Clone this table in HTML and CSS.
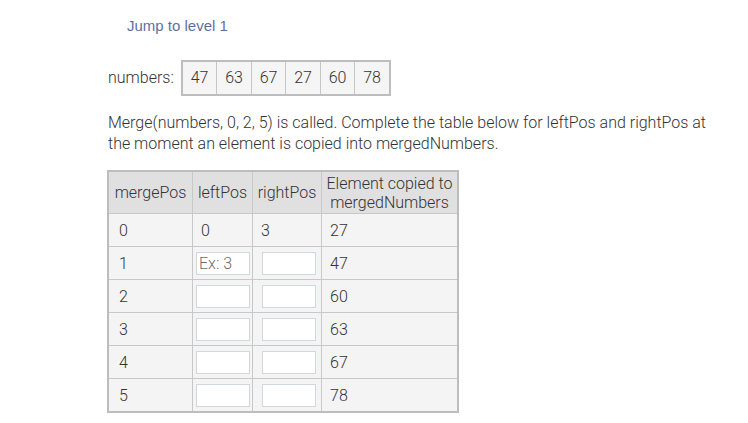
FILE: index.html
```html
<!DOCTYPE html>
<html>
<head>
<meta charset="utf-8">
<link rel="stylesheet" href="styles.css">
</head>
<body>
<div class="page">
  <a class="jump">Jump to level 1</a>
  <div class="array-row">
    <span class="array-label">numbers:</span>
    <div class="array">
      <span class="cell">47</span><span class="cell">63</span><span class="cell">67</span><span class="cell">27</span><span class="cell">60</span><span class="cell">78</span>
    </div>
  </div>
  <p class="prompt">Merge(numbers, 0, 2, 5) is called. Complete the table below for leftPos and rightPos at the moment an element is copied into mergedNumbers.</p>
  <table class="merge">
    <colgroup>
      <col class="k1"><col class="k2"><col class="k3"><col class="k4">
    </colgroup>
    <thead>
      <tr>
        <th>mergePos</th>
        <th>leftPos</th>
        <th>rightPos</th>
        <th><span class="hl">Element copied to</span><span class="hl">mergedNumbers</span></th>
      </tr>
    </thead>
    <tbody>
      <tr><td class="c1">0</td><td class="txt">0</td><td class="txt">3</td><td class="c4">27</td></tr>
      <tr><td class="c1">1</td><td class="inp"><input type="text" placeholder="Ex: 3"></td><td class="inp r"><input type="text"></td><td class="c4">47</td></tr>
      <tr><td class="c1">2</td><td class="inp"><input type="text"></td><td class="inp r"><input type="text"></td><td class="c4">60</td></tr>
      <tr><td class="c1">3</td><td class="inp"><input type="text"></td><td class="inp r"><input type="text"></td><td class="c4">63</td></tr>
      <tr><td class="c1">4</td><td class="inp"><input type="text"></td><td class="inp r"><input type="text"></td><td class="c4">67</td></tr>
      <tr class="last"><td class="c1">5</td><td class="inp"><input type="text"></td><td class="inp r"><input type="text"></td><td class="c4">78</td></tr>
    </tbody>
  </table>
</div>
</body>
</html>
```
FILE: styles.css
```css
html, body {
  margin: 0;
  padding: 0;
  background: #ffffff;
}

.page {
  padding: 17px 0 0 108px;
  font-family: Roboto, "Noto Sans", sans-serif;
  font-weight: 300;
  font-size: 16px;
  color: #333333;
}

.jump {
  display: block;
  margin-left: 19px;
  font-family: "Liberation Sans", Arial, sans-serif;
  font-weight: 400;
  font-size: 15px;
  line-height: 17px;
  color: #5f6f9f;
}

.array-row {
  display: flex;
  align-items: center;
  margin-top: 26px;
}

.array-label {
  margin-right: 7px;
  line-height: 20px;
}

.array {
  display: flex;
  border: 2px solid #bdbdbd;
  background: #f5f5f5;
}

.cell {
  width: 33.5px;
  text-align: center;
  height: 32px;
  line-height: 32px;
  border-right: 1px solid #c6c6c6;
}

.cell:last-child {
  border-right: none;
}

.prompt {
  margin: 16px 0 16px 0;
  max-width: 615px;
  line-height: 21px;
}

.merge {
  width: 352px;
  margin-left: -1px;
  border-collapse: separate;
  border-spacing: 0;
  border: 2px solid #bdbdbd;
  table-layout: fixed;
  background: #f4f4f4;
}

.merge col.k1 { width: 84px; }
.merge col.k2 { width: 60px; }
.merge col.k3 { width: 69px; }
.merge col.k4 { width: 135px; }

.merge th, .merge td {
  border-right: 1px solid #c8c8c8;
  border-bottom: 1px solid #c8c8c8;
  padding: 0;
  font-weight: 300;
}

.merge th:last-child, .merge td:last-child {
  border-right: none;
}

.merge tr.last td {
  border-bottom: none;
}

.merge th {
  background: #e0e0e0;
  height: 41px;
  text-align: center;
  line-height: 19px;
  font-size: 16px;
  white-space: nowrap;
}

.merge th .hl {
  display: block;
  line-height: 19px;
}

.merge td {
  height: 32px;
  text-align: left;
  vertical-align: middle;
}

.merge td.c1 { padding-left: 10px; }
.merge td.c4 { padding-left: 8px; }
.merge td.txt { padding-left: 8px; }

.merge td.inp {
  padding: 0 0 0 3px;
}

.merge td.inp.r {
  padding-left: 9px;
}

.merge input {
  display: block;
  box-sizing: border-box;
  width: 54px;
  height: 23px;
  margin: 0;
  padding: 0 2px;
  border: 1px solid #cfd8dc;
  background: #ffffff;
  font-family: Roboto, "Noto Sans", sans-serif;
  font-weight: 300;
  font-size: 16px;
  color: #333333;
}

.merge input::placeholder {
  color: #6b6b6b;
  opacity: 1;
}
```
